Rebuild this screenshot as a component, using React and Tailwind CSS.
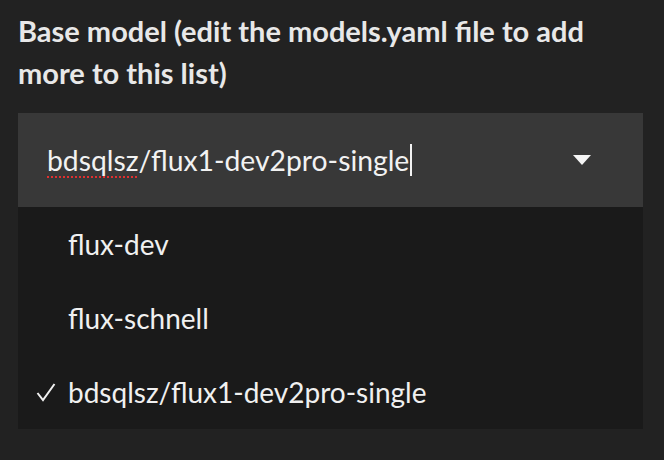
import React from "react";

function Check() {
  return (
    <svg width="20" height="20" viewBox="0 0 20 20" className="block">
      <path d="M1.5 11 L7 18 L18.5 2" fill="none" stroke="#f0f0f0" strokeWidth="2" strokeLinecap="butt" strokeLinejoin="miter" />
    </svg>
  );
}

export default function App() {
  const options = ["flux-dev", "flux-schnell", "bdsqlsz/flux1-dev2pro-single"];
  const selected = "bdsqlsz/flux1-dev2pro-single";
  return (
    <div
      className="w-[664px] h-[460px] bg-[#222222] overflow-hidden px-[18px] pt-[10px]"
      style={{ fontFamily: "'Source Sans Pro', Lato, 'Noto Sans', sans-serif" }}
    >
      <div className="text-[29px] leading-[42px] font-bold text-[#e8e8e8] w-[610px]">
        Base model (edit the models.yaml file to add more to this list)
      </div>
      <div className="mt-[19px] w-[625px]">
        <div className="h-[94px] bg-[#383838] flex items-center pl-[29px] pr-[52px]">
          <span className="text-[28.3px] text-[#f2f2f2] flex items-center">
            <span className="underline decoration-dotted decoration-[#e03030] decoration-2 underline-offset-[6px]">bdsqlsz</span>
            /flux1-dev2pro-single
            <span className="inline-block w-[1.5px] h-[32px] bg-[#f2f2f2] ml-[1px]" />
          </span>
          <span className="ml-auto">
            <svg width="18" height="10" viewBox="0 0 18 10" className="block">
              <polygon points="0,0 18,0 9,10" fill="#f5f5f5" />
            </svg>
          </span>
        </div>
        <div className="bg-[#1a1a1a] h-[222px] flex flex-col justify-center">
          {options.map((o) => (
            <div key={o} className="h-[74px] flex items-center text-[28px] text-[#f0f0f0]">
              <span className="w-[50px] flex justify-start pl-[18px]">
                {o === selected ? <Check /> : null}
              </span>
              <span>{o}</span>
            </div>
          ))}
        </div>
      </div>
    </div>
  );
}
